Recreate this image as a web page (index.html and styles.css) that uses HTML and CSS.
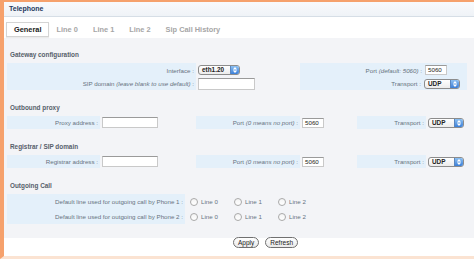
FILE: index.html
```html
<!DOCTYPE html>
<html lang="en">
<head>
  <meta charset="UTF-8">
  <title>Telephone</title>
  <link rel="stylesheet" href="styles.css">
</head>
<body>
  <div class="panel">
    <div class="titlebar">Telephone</div>

    <div class="tabs">
      <span class="tab active">General</span>
      <span class="tab">Line 0</span>
      <span class="tab">Line 1</span>
      <span class="tab">Line 2</span>
      <span class="tab">Sip Call History</span>
    </div>

    <div class="content">
      <div class="group">
        <h3>Gateway configuration</h3>
        <div class="gw">
          <div class="lbl"><span>Interface :</span></div>
          <div class="val"><span class="select wide">eth1.20<span class="arrows"><svg viewBox="0 0 8 8" width="8" height="8"><path d="M4 1L6.2 3.4H1.8Z M4 7L1.8 4.6H6.2Z" fill="#fff"/></svg></span></span></div>
          <div class="lbl"><span>SIP domain <i>(leave blank to use default)</i> :</span></div>
          <div class="val"><span class="input sip"></span></div>
          <div class="gw-right">
            <div class="gw-row">
              <span class="rlbl">Port <i>(default: 5060)</i> :</span>
              <span class="input port gwport">5060</span>
            </div>
            <div class="gw-row">
              <span class="rlbl">Transport :</span>
              <span class="select udp gwudp">UDP<span class="arrows"><svg viewBox="0 0 8 8" width="8" height="8"><path d="M4 1L6.2 3.4H1.8Z M4 7L1.8 4.6H6.2Z" fill="#fff"/></svg></span></span>
            </div>
          </div>
        </div>
      </div>

      <div class="group">
        <h3>Outbound proxy</h3>
        <div class="row6">
          <div class="lbl"><span>Proxy address :</span></div>
          <div class="val"><span class="input addr"></span></div>
          <div class="lbl"><span>Port <i>(0 means no port)</i> :</span></div>
          <div class="val"><span class="input port">5060</span></div>
          <div class="lbl"><span>Transport :</span></div>
          <div class="val"><span class="select udp">UDP<span class="arrows"><svg viewBox="0 0 8 8" width="8" height="8"><path d="M4 1L6.2 3.4H1.8Z M4 7L1.8 4.6H6.2Z" fill="#fff"/></svg></span></span></div>
        </div>
      </div>

      <div class="group">
        <h3>Registrar / SIP domain</h3>
        <div class="row6">
          <div class="lbl"><span>Registrar address :</span></div>
          <div class="val"><span class="input addr"></span></div>
          <div class="lbl"><span>Port <i>(0 means no port)</i> :</span></div>
          <div class="val"><span class="input port">5060</span></div>
          <div class="lbl"><span>Transport :</span></div>
          <div class="val"><span class="select udp">UDP<span class="arrows"><svg viewBox="0 0 8 8" width="8" height="8"><path d="M4 1L6.2 3.4H1.8Z M4 7L1.8 4.6H6.2Z" fill="#fff"/></svg></span></span></div>
        </div>
      </div>

      <div class="group">
        <h3>Outgoing Call</h3>
        <div class="radios">
          <div class="lbl"><span>Default line used for outgoing call by Phone 1 :</span></div>
          <div class="opt"><span class="radio"></span>Line 0</div>
          <div class="opt"><span class="radio"></span>Line 1</div>
          <div class="opt"><span class="radio"></span>Line 2</div>
          <div class="lbl"><span>Default line used for outgoing call by Phone 2 :</span></div>
          <div class="opt"><span class="radio"></span>Line 0</div>
          <div class="opt"><span class="radio"></span>Line 1</div>
          <div class="opt"><span class="radio"></span>Line 2</div>
        </div>
      </div>

      <div class="actions">
        <button class="btn">Apply</button>
        <button class="btn">Refresh</button>
      </div>
    </div>
  </div>
</body>
</html>
```

FILE: styles.css
```css
* { box-sizing: border-box; margin: 0; padding: 0; }

body {
  font-family: 'Liberation Sans', Arial, sans-serif;
  background: #ffffff;
  overflow: hidden;
}

.panel {
  border-top: 2px solid #f6a16c;
  border-left: 4px solid #f6a16c;
  border-bottom: 3px solid #fbe3d2;
  height: 259px;
}

.titlebar {
  height: 15px;
  line-height: 14px;
  padding-left: 5px;
  font-size: 7px;
  font-weight: bold;
  color: #1f3a60;
  background: linear-gradient(to bottom, #f9fafc, #eff3f7);
  border-bottom: 1px solid #d6dee6;
}

.tabs {
  height: 21px;
  padding: 5px 0 0 2px;
  display: flex;
  align-items: flex-start;
  background: #ffffff;
}

.tab {
  height: 15px;
  line-height: 14px;
  padding: 0 6px 0 7px;
  font-size: 7.4px;
  font-weight: bold;
  color: #a6a6a6;
  border: 1px solid transparent;
}

.tab.active {
  color: #222222;
  background: #ffffff;
  border-color: #d4d4d4;
  box-shadow: 0 1px 1px rgba(0,0,0,0.08);
}

.content {
  background: #f3f4f7;
  height: 200px;
  padding: 12px 7px 0 3px;
}

.group { margin-bottom: 13px; }

.group h3 {
  height: 10px;
  line-height: 10px;
  margin-bottom: 3px;
  padding-left: 3px;
  font-size: 6.4px;
  font-weight: bold;
  color: #56606a;
}

.lbl {
  background: #e4f0fa;
  display: flex;
  align-items: center;
  justify-content: flex-end;
  padding-right: 2px;
  font-size: 6.2px;
  color: #67737f;
  white-space: nowrap;
}

.val {
  display: flex;
  align-items: center;
  padding-left: 2px;
}

/* gateway block */
.gw {
  display: grid;
  grid-template-columns: 189px 104px 167px;
  grid-template-rows: 14px 13px;
}

.gw-right {
  grid-column: 3;
  grid-row: 1 / 3;
  background: #e4f0fa;
  display: grid;
  grid-template-rows: 14px 13px;
}

.gw-row {
  display: flex;
  align-items: center;
  justify-content: flex-end;
  gap: 3px;
}

.rlbl {
  font-size: 6.2px;
  color: #67737f;
  white-space: nowrap;
}

.gwport { margin-right: 20px; }
.gwudp { margin-right: 7px; }

/* rows with three label/value pairs */
.row6 {
  display: grid;
  grid-template-columns: 93px 96px 104px 57px 69px 41px;
  height: 13px;
}

/* radio rows */
.radios {
  display: grid;
  grid-template-columns: 178px 44px 44px 44px;
  grid-auto-rows: 15px;
}

.opt {
  display: flex;
  align-items: center;
  gap: 3px;
  padding-left: 5px;
  font-size: 6.2px;
  color: #67737f;
}

.radio {
  width: 8px;
  height: 8px;
  border-radius: 50%;
  border: 1px solid #a9a9a9;
  background: linear-gradient(to bottom, #f4f4f4, #ffffff);
}

/* form controls */
.input {
  display: inline-block;
  height: 11px;
  background: #ffffff;
  border: 1px solid #c9c9c9;
  border-top-color: #9a9a9a;
  font-size: 6.2px;
  line-height: 9px;
  padding-left: 2px;
  color: #222222;
}

.input.sip { width: 57px; height: 12px; }
.input.addr { width: 56px; }
.input.port { width: 22px; height: 10px; line-height: 8px; }

.select {
  position: relative;
  display: inline-block;
  height: 10px;
  line-height: 8px;
  padding-left: 3px;
  border: 1px solid #8c8c8c;
  border-radius: 3px;
  background: linear-gradient(to bottom, #ffffff, #ececec);
  font-size: 6.4px;
  font-weight: bold;
  color: #222222;
  overflow: hidden;
}

.select.wide { width: 42px; }
.select.udp { width: 36px; }

.arrows {
  position: absolute;
  top: 0;
  right: 0;
  width: 9px;
  height: 100%;
  display: flex;
  align-items: center;
  justify-content: center;
  background: linear-gradient(to bottom, #8cc0f2, #3b7fd8);
  border-left: 1px solid #5a86bf;
}

.actions {
  display: flex;
  gap: 6px;
  padding-left: 226px;
}

.btn {
  height: 11px;
  padding: 0 4px;
  border: 1px solid #707070;
  border-radius: 6px;
  background: linear-gradient(to bottom, #ffffff, #e9e9e9);
  font-family: 'Liberation Sans', Arial, sans-serif;
  font-size: 6.5px;
  color: #222222;
  line-height: 9px;
}
```
